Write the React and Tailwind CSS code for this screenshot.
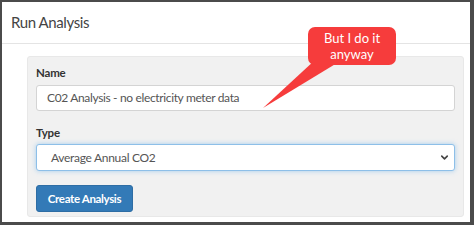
import { ChevronDown } from "lucide-react";

const font = { fontFamily: 'Lato, "Open Sans", sans-serif' };

export default function App() {
  return (
    <div className="w-[474px] h-[225px] bg-[#4b4b4b] pt-[2px] pl-[2px] pr-[4px] pb-[3px]" style={font}>
      <div className="relative h-full bg-white flex flex-col">
        {/* header */}
        <div className="h-[42px] flex items-center pl-[9px] border-b border-[#e4e4e4]">
          <span className="text-[15px] tracking-[-0.4px] text-[#444]">Run Analysis</span>
        </div>

        {/* form panel */}
        <div className="ml-[25px] mr-[6px] mt-[12px] bg-[#f1f1f1] border border-[#e8e8e8] rounded-[3px] px-[8px] pt-[8px] pb-[4px]">
          <label className="block text-[11.5px] tracking-[-0.2px] font-bold leading-[16px] text-[#333]">Name</label>
          <div className="mt-[4px] h-[26px] bg-white border border-[#d4d4d4] rounded-[3px] flex items-center px-[10px]">
            <span className="text-[12px] tracking-[-0.35px] text-[#555]">C02 Analysis - no electricity meter data</span>
          </div>

          <label className="block mt-[14px] text-[11.5px] tracking-[-0.2px] font-bold leading-[16px] text-[#333]">Type</label>
          <div className="mt-[3px] h-[27px] bg-white border border-[#8dbfe8] rounded-[3px] shadow-[0_0_5px_rgba(102,175,233,0.55)] flex items-center justify-between pl-[14px] pr-[4px]">
            <span className="text-[12px] tracking-[-0.3px] text-[#555]">Average Annual CO2</span>
            <ChevronDown size={11} strokeWidth={3.5} className="text-[#444]" />
          </div>

          <button className="mt-[14px] h-[27px] w-[97px] bg-[#337ab7] border border-[#2e6da4] rounded-[3px] text-white text-[11.5px] tracking-[-0.35px] font-bold">
            Create Analysis
          </button>
        </div>

        {/* callout */}
        <svg className="absolute left-0 top-0 pointer-events-none" width="468" height="220">
          <polygon points="313,58 340,58 261,106" fill="#f63c3c" />
        </svg>
        <div className="absolute left-[306px] top-[25px] w-[88px] h-[38px] rounded-[7px] bg-[#f63c3c] flex flex-col items-center justify-center text-white text-[13px] leading-[16px]">
          <span>But I do it</span>
          <span>anyway</span>
        </div>
      </div>
    </div>
  );
}
